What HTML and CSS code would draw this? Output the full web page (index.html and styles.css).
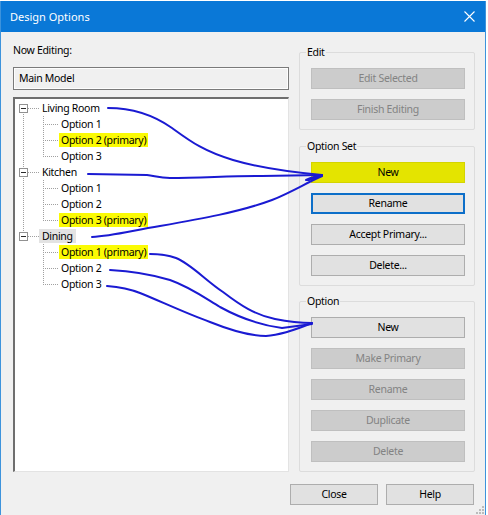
FILE: index.html
```html
<!DOCTYPE html>
<html>
<head>
<meta charset="utf-8">
<title>Design Options</title>
<link rel="stylesheet" href="styles.css">
</head>
<body>
<div class="window">
  <div class="titlebar">
    <span class="title">Design Options</span>
    <svg class="close" width="11" height="11" viewBox="0 0 11 11"><path d="M0.5 0.5L10.5 10.5M10.5 0.5L0.5 10.5" stroke="#fff" stroke-width="1.1" fill="none"/></svg>
  </div>
  <div class="content">
    <div class="left">
      <div class="caption">Now Editing:</div>
      <div class="textbox">Main Model</div>
      <div class="tree">
        <ul class="roots">
          <li class="node">
            <div class="prow"><span class="exp"><span class="minus"></span></span><span class="hdots short"></span><span class="lbl">Living Room</span></div>
            <ul class="kids">
              <li class="crow"><span class="hdots"></span><span class="lbl">Option 1</span></li>
              <li class="crow"><span class="hdots"></span><span class="lbl hl">Option 2 (primary)</span></li>
              <li class="crow"><span class="hdots"></span><span class="lbl">Option 3</span></li>
            </ul>
          </li>
          <li class="node">
            <div class="prow"><span class="exp"><span class="minus"></span></span><span class="hdots short"></span><span class="lbl">Kitchen</span></div>
            <ul class="kids">
              <li class="crow"><span class="hdots"></span><span class="lbl">Option 1</span></li>
              <li class="crow"><span class="hdots"></span><span class="lbl">Option 2</span></li>
              <li class="crow"><span class="hdots"></span><span class="lbl hl">Option 3 (primary)</span></li>
            </ul>
          </li>
          <li class="node">
            <div class="prow"><span class="exp"><span class="minus"></span></span><span class="hdots short"></span><span class="lbl sel">Dining</span></div>
            <ul class="kids">
              <li class="crow"><span class="hdots"></span><span class="lbl hl">Option 1 (primary)</span></li>
              <li class="crow"><span class="hdots"></span><span class="lbl">Option 2</span></li>
              <li class="crow"><span class="hdots"></span><span class="lbl">Option 3</span></li>
            </ul>
          </li>
        </ul>
      </div>
    </div>
    <div class="right">
      <div class="group g-edit">
        <div class="gtitle">Edit</div>
        <div class="btns">
          <div class="btn disabled">Edit Selected</div>
          <div class="btn disabled">Finish Editing</div>
        </div>
      </div>
      <div class="group g-set">
        <div class="gtitle">Option Set</div>
        <div class="btns">
          <div class="btn marked">New</div>
          <div class="btn focused">Rename</div>
          <div class="btn">Accept Primary...</div>
          <div class="btn">Delete...</div>
        </div>
      </div>
      <div class="group g-opt">
        <div class="gtitle">Option</div>
        <div class="btns">
          <div class="btn">New</div>
          <div class="btn disabled">Make Primary</div>
          <div class="btn disabled">Rename</div>
          <div class="btn disabled">Duplicate</div>
          <div class="btn disabled">Delete</div>
        </div>
      </div>
    </div>
  </div>
  <div class="footer">
    <div class="btn fbtn">Close</div>
    <div class="btn fbtn">Help</div>
  </div>
  <svg class="ink" width="488" height="515" viewBox="0 0 488 515">
    <g fill="none" stroke="#1a1ad2" stroke-width="2" stroke-linecap="round" stroke-linejoin="round">
      <path d="M108,108 C135,108 155,116 172,128 C190,141 203,151 233,160 C260,168 290,172 322,175"/>
      <path d="M88,174 L147,175 C155,176 160,178 170,178 C200,178 230,176 262,176 L322,175"/>
      <path d="M92,237 C112,236 130,231 160,226 C200,219 240,212 272,200 C292,192 306,183 322,176"/>
      <path d="M322,175 C315,178 309,181 306,180 C310,178 316,176 322,176"/>
      <path d="M150,254 C160,254 168,255 176,258 C191,264 205,280 223,292 C240,305 255,315 275,319 C290,322 300,323 312,323"/>
      <path d="M110,270 C130,271 150,274 170,280 C190,287 205,298 220,307 C240,318 260,325 282,328 L312,324"/>
      <path d="M107,286 C120,287 130,289 140,293 C160,301 185,313 210,322 C230,330 250,336 266,336 C281,335 295,330 312,323"/>
    </g>
  </svg>
  <svg class="grip" width="9" height="9" viewBox="0 0 9 9">
    <g fill="#bcbcbc">
      <rect x="7" y="1" width="2" height="2"/>
      <rect x="4" y="4" width="2" height="2"/><rect x="7" y="4" width="2" height="2"/>
      <rect x="1" y="7" width="2" height="2"/><rect x="4" y="7" width="2" height="2"/><rect x="7" y="7" width="2" height="2"/>
    </g>
  </svg>
</div>
</body>
</html>
```

FILE: styles.css
```css
* { box-sizing: border-box; }

body {
  margin: 0;
  background: #ffffff;
  font-family: "Noto Sans", "Open Sans", sans-serif;
  font-size: 10.5px;
  letter-spacing: -0.3px;
  color: #000;
}

.window {
  position: relative;
  width: 486px;
  height: 514px;
  margin-top: 1px;
  background: #f0f0f0;
  border-left: 1px solid #3d93dc;
  border-right: 1px solid #3d93dc;
  display: flex;
  flex-direction: column;
  overflow: hidden;
}

.titlebar {
  height: 31px;
  flex: none;
  background: #0a78d7;
  display: flex;
  align-items: center;
  justify-content: space-between;
  padding: 0 10px 0 9px;
  color: #fff;
  font-size: 11px;
  letter-spacing: 0;
}

.close { display: block; }

.content {
  display: grid;
  grid-template-columns: 276px 176px;
  column-gap: 10px;
  padding: 11px 10px 0 12px;
}

.left { display: flex; flex-direction: column; }

.caption { line-height: 14px; height: 14px; }

.textbox {
  margin-top: 10px;
  height: 23px;
  border: 1px solid #7a7a7a;
  box-shadow: inset 0 0 0 1px #fdfdfd;
  line-height: 21px;
  padding-left: 5px;
}

.tree {
  margin-top: 7px;
  height: 375px;
  background: #fff;
  border-style: solid;
  border-width: 2px 1px 1px 2px;
  border-color: #6e6e6e #e3e3e3 #e3e3e3 #6e6e6e;
  padding-top: 1px;
}

ul { list-style: none; margin: 0; padding: 0; }

.roots {
  background-image: repeating-linear-gradient(to bottom, #a0a0a0 0 1px, transparent 1px 2px);
  background-repeat: no-repeat;
  background-size: 1px 128px;
  background-position: 8px 8px;
}

.prow {
  display: flex;
  align-items: center;
  height: 16px;
  padding-left: 4px;
}

.exp {
  width: 9px;
  height: 9px;
  border: 1px solid #919191;
  background: #fff;
  display: flex;
  align-items: center;
  justify-content: center;
}

.minus { width: 5px; height: 1px; background: #2a2a2a; }

.hdots {
  flex: none;
  width: 16px;
  height: 1px;
  background: repeating-linear-gradient(to right, #a0a0a0 0 1px, transparent 1px 2px);
}

.hdots.short { width: 11px; }

.lbl {
  line-height: 14px;
  padding: 0 2px;
  white-space: nowrap;
}

.prow .lbl { padding: 0 3px; }

.sel { background: #e3e3e3; }
.hl { background: #fbfb04; }

.kids {
  margin-left: 28px;
  background-image: repeating-linear-gradient(to bottom, #a0a0a0 0 1px, transparent 1px 2px);
  background-repeat: no-repeat;
  background-size: 1px 40px;
  background-position: 0 0;
}

.crow {
  display: flex;
  align-items: center;
  height: 16px;
}

.right { display: flex; flex-direction: column; }

.group {
  border: 1px solid #dcdcdc;
  border-radius: 2px;
  padding: 0 9px 9px 11px;
}

.g-edit { margin-top: 9px; }
.g-set { margin-top: 16px; }
.g-opt { margin-top: 15px; flex: 1; }

.gtitle {
  width: fit-content;
  line-height: 14px;
  margin: -8px 0 0 -5px;
  padding: 0 1px;
  background: #f0f0f0;
}

.btns {
  display: flex;
  flex-direction: column;
  gap: 10px;
  margin-top: 9px;
}

.btn {
  height: 21px;
  border: 1px solid #adadad;
  background: #e1e1e1;
  text-align: center;
  line-height: 19px;
  white-space: nowrap;
}

.btn.disabled {
  background: #cccccc;
  border-color: #bfbfbf;
  color: #838383;
}

.btn.focused {
  border: 2px solid #0d6fc9;
  line-height: 17px;
}

.btn.marked {
  background: #e4e400;
  border-color: #d4d400;
}

.footer {
  display: flex;
  justify-content: flex-end;
  gap: 8px;
  padding: 12px 11px 0 0;
}

.fbtn { width: 88px; }

.ink {
  position: absolute;
  left: -1px;
  top: -1px;
  pointer-events: none;
}

.grip {
  position: absolute;
  right: 1px;
  bottom: 1px;
}
```
